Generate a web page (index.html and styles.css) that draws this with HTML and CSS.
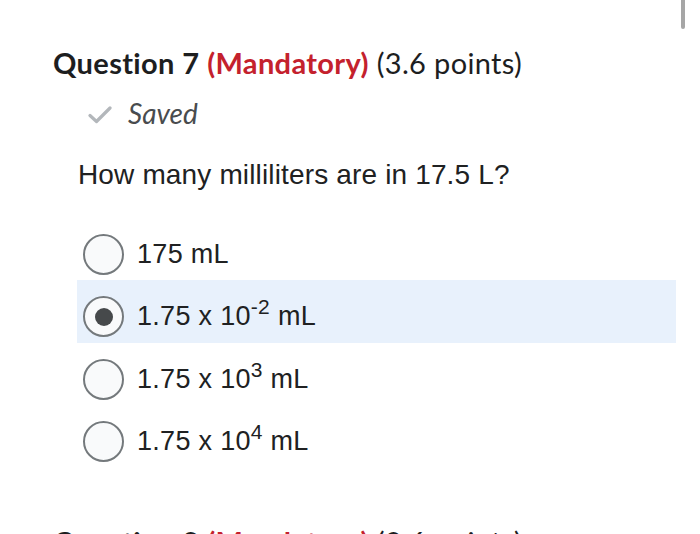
FILE: index.html
```html
<!DOCTYPE html>
<html lang="en">
<head>
    <meta charset="UTF-8">
    <meta name="viewport" content="width=device-width, initial-scale=1.0">
    <title>Quiz</title>
    <link rel="stylesheet" href="styles.css">
</head>
<body>
    <div class="scrollbar"></div>
    <main class="quiz">
        <section class="question">
            <h2 class="question-title">
                <strong>Question 7</strong>
                <strong class="mandatory">(Mandatory)</strong>
                <span>(3.6 points)</span>
            </h2>
            <div class="saved">
                <svg class="check" width="24" height="18" viewBox="0 0 24 18">
                    <path d="M2 9.5 L8.5 15.5 L22 2" fill="none" stroke="#b3b7bb" stroke-width="3.2" stroke-linecap="round" stroke-linejoin="round"/>
                </svg>
                <span>Saved</span>
            </div>
            <p class="question-text">How many milliliters are in 17.5 L?</p>
            <div class="options">
                <label class="option">
                    <span class="radio"></span>
                    <span>175 mL</span>
                </label>
                <label class="option selected">
                    <span class="radio"></span>
                    <span>1.75 x 10<sup>-2</sup> mL</span>
                </label>
                <label class="option">
                    <span class="radio"></span>
                    <span>1.75 x 10<sup>3</sup> mL</span>
                </label>
                <label class="option">
                    <span class="radio"></span>
                    <span>1.75 x 10<sup>4</sup> mL</span>
                </label>
            </div>
        </section>
        <section class="question">
            <h2 class="question-title">
                <strong>Question 8</strong>
                <strong class="mandatory">(Mandatory)</strong>
                <span>(3.6 points)</span>
            </h2>
        </section>
    </main>
</body>
</html>
```

FILE: styles.css
```css
body {
    margin: 0;
    padding: 0;
    background-color: #fff;
    font-family: "Liberation Sans", Arial, sans-serif;
    color: #202122;
}

.scrollbar {
    position: absolute;
    top: 0;
    left: 681px;
    width: 4px;
    height: 29px;
    background-color: #a6a6a6;
    border-radius: 0 0 2px 2px;
}

.quiz {
    padding: 46px 0 0 53px;
}

.question-title {
    margin: 0;
    font-family: Lato, sans-serif;
    font-size: 29px;
    font-weight: normal;
    letter-spacing: 0.35px;
    line-height: 34px;
    color: #1d1e1f;
    font-variant-ligatures: none;
}

.question-title strong {
    font-weight: bold;
}

.mandatory {
    color: #c4212d;
}

.saved {
    display: flex;
    align-items: center;
    gap: 16px;
    margin: 18px 0 0 35px;
    font-family: Lato, sans-serif;
    font-style: italic;
    font-size: 28px;
    line-height: 30px;
    color: #494c4e;
}

.check {
    margin-top: 4px;
}

.question-text {
    margin: 30px 0 0 25px;
    font-size: 28px;
    letter-spacing: 0.15px;
    line-height: 34px;
}

.options {
    margin: 26px 0 0 24px;
    width: 599px;
}

.option {
    display: flex;
    align-items: center;
    gap: 13px;
    height: 62px;
    padding: 10px 0 0 6px;
    box-sizing: border-box;
    font-size: 27px;
    letter-spacing: 0.3px;
}

.option.selected {
    height: 63px;
    background-color: #e8f1fc;
}

.option sup {
    font-size: 21px;
    vertical-align: 11px;
    line-height: 0;
}

.radio {
    width: 37px;
    height: 37px;
    border: 2px solid #74797c;
    border-radius: 50%;
    background-color: #f9fafb;
    display: flex;
    align-items: center;
    justify-content: center;
    flex-shrink: 0;
}

.selected .radio::after {
    content: "";
    width: 18px;
    height: 18px;
    border-radius: 50%;
    background-color: #46494b;
}

.question + .question {
    margin-top: 58px;
}
```
